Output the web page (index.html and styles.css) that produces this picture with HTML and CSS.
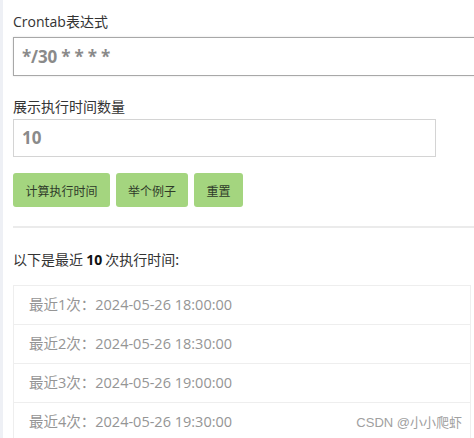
FILE: index.html
```html
<!DOCTYPE html>
<html lang="zh">
<head>
<meta charset="utf-8">
<link rel="stylesheet" href="styles.css">
</head>
<body>
<div class="page">
  <div class="field">
    <label class="label">Crontab表达式</label>
    <div class="input input-wide focused">*/30 * * * *</div>
  </div>
  <div class="field">
    <label class="label">展示执行时间数量</label>
    <div class="input input-count">10</div>
  </div>
  <div class="buttons">
    <button class="btn btn-calc">计算执行时间</button>
    <button class="btn btn-example">举个例子</button>
    <button class="btn btn-reset">重置</button>
  </div>
  <hr class="divider">
  <p class="summary">以下是最近 <b>10</b> 次执行时间:</p>
  <ul class="results">
    <li>最近1次：2024-05-26 18:00:00</li>
    <li>最近2次：2024-05-26 18:30:00</li>
    <li>最近3次：2024-05-26 19:00:00</li>
    <li>最近4次：2024-05-26 19:30:00</li>
  </ul>
</div>
<div class="watermark">CSDN @小小爬虾</div>
</body>
</html>
```

FILE: styles.css
```css
html, body {
  margin: 0;
  padding: 0;
  height: 100%;
  overflow: hidden;
  background: #fff;
}
body {
  font-family: "Open Sans", "Noto Sans CJK SC", sans-serif;
  color: #333;
  border-left: 3px solid #eef0f5;
  box-sizing: border-box;
  position: relative;
}
.page {
  padding: 12px 0 0 10px;
}
.field {
  display: flex;
  flex-direction: column;
}
.label {
  font-size: 14px;
  line-height: 20px;
  height: 20px;
  color: #333;
  font-family: "Open Sans", "Noto Sans CJK SC", sans-serif;
}
.input {
  box-sizing: border-box;
  height: 39px;
  margin-top: 5px;
  border: 1px solid #c8c8c8;
  padding: 0 8px;
  font-family: "Open Sans", "Noto Sans CJK SC", sans-serif;
  font-weight: 700;
  font-size: 17px;
  line-height: 37px;
  color: #8a8a8a;
}
.input-wide {
  width: 480px;
  border-color: #a8a8a8;
  box-shadow: 0 0 2px rgba(0,0,0,0.12);
  letter-spacing: -0.2px;
}
.field + .field {
  margin-top: 21px;
}
.input-count {
  width: 423px;
  height: 38px;
  margin-top: 2px;
  border-color: #d4d4d4;
  line-height: 36px;
}
.buttons {
  display: flex;
  gap: 6px;
  margin-top: 16px;
}
.btn {
  height: 34px;
  border: none;
  border-radius: 3px;
  background: #a4d57f;
  color: #2f3b2a;
  font-family: "Noto Sans CJK SC", sans-serif;
  font-size: 12px;
  padding: 0;
  white-space: nowrap;
  text-align: center;
  cursor: pointer;
}
.btn-calc { width: 97px; }
.btn-example { width: 72px; }
.btn-reset { width: 49px; }
.divider {
  margin: 19px 0 0 0;
  border: none;
  border-top: 2px solid #ebebeb;
  width: 470px;
}
.summary {
  margin: 21px 0 0 0;
  font-family: "Noto Sans CJK SC", sans-serif;
  font-size: 14px;
  line-height: 20px;
  color: #333;
}
.summary b {
  font-family: "Open Sans", sans-serif;
  font-weight: 700;
  color: #111;
}
.results {
  list-style: none;
  margin: 15px 0 0 0;
  padding: 0;
  width: 458px;
}
.results li {
  box-sizing: border-box;
  height: 40px;
  border: 1px solid #eeeeee;
  margin-top: -1px;
  padding-left: 15px;
  font-family: "Open Sans", "Noto Sans CJK SC", sans-serif;
  font-size: 14.5px;
  line-height: 38px;
  color: #959595;
}
.results li:first-child { margin-top: 0; }
.watermark {
  position: absolute;
  right: 12px;
  bottom: 7px;
  font-family: "Liberation Sans", "Noto Sans CJK SC", sans-serif;
  font-size: 13px;
  color: #a0a0a0;
  text-shadow: 0 0 2px #fff, 0 0 2px #fff;
}
```
